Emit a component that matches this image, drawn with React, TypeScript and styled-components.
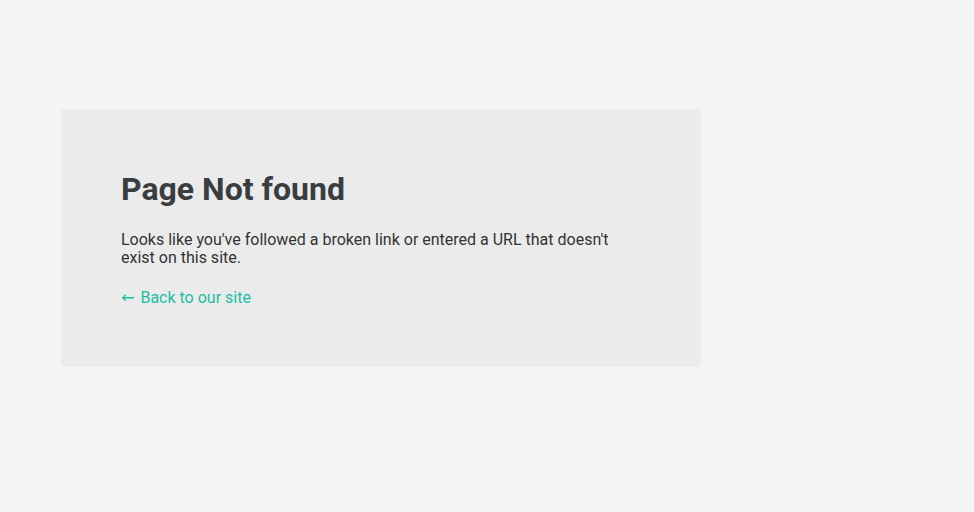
import styled, { createGlobalStyle } from 'styled-components';

const GlobalStyle = createGlobalStyle`
  html, body {
    margin: 0;
    padding: 0;
    background: #f3f4f6;
    font-family: Roboto, "Liberation Sans", sans-serif;
    color: #333;
  }
`;

const Page = styled.main`
  min-height: 512px;
  padding: 109px 0 0 61px;
  box-sizing: border-box;
`;

const Card = styled.section`
  width: 640px;
  box-sizing: border-box;
  padding: 61px 60px 60px;
  background: #ebebeb;
  border-radius: 4px;
`;

const Title = styled.h1`
  margin: 0 0 23px;
  font-size: 32px;
  line-height: 38px;
  font-weight: 700;
  color: #3a3d3f;
`;

const Text = styled.p`
  margin: 0 0 21px;
  font-size: 16px;
  line-height: 18px;
  color: #333;
`;

const BackLink = styled.a`
  display: inline-block;
  font-size: 16px;
  line-height: 19px;
  color: #1cbfa4;
  text-decoration: none;
`;

const Arrow = styled.span`
  font-family: "DejaVu Sans", sans-serif;
  font-size: 16px;
  margin-right: 6px;
`;

function App(): JSX.Element {
  return (
    <>
      <GlobalStyle />
      <Page>
        <Card>
          <Title>Page Not found</Title>
          <Text>
            Looks like you've followed a broken link or entered a URL that doesn't exist on
            this site.
          </Text>
          <BackLink href="#">
            <Arrow>←</Arrow>Back to our site
          </BackLink>
        </Card>
      </Page>
    </>
  );
}

export default App;
